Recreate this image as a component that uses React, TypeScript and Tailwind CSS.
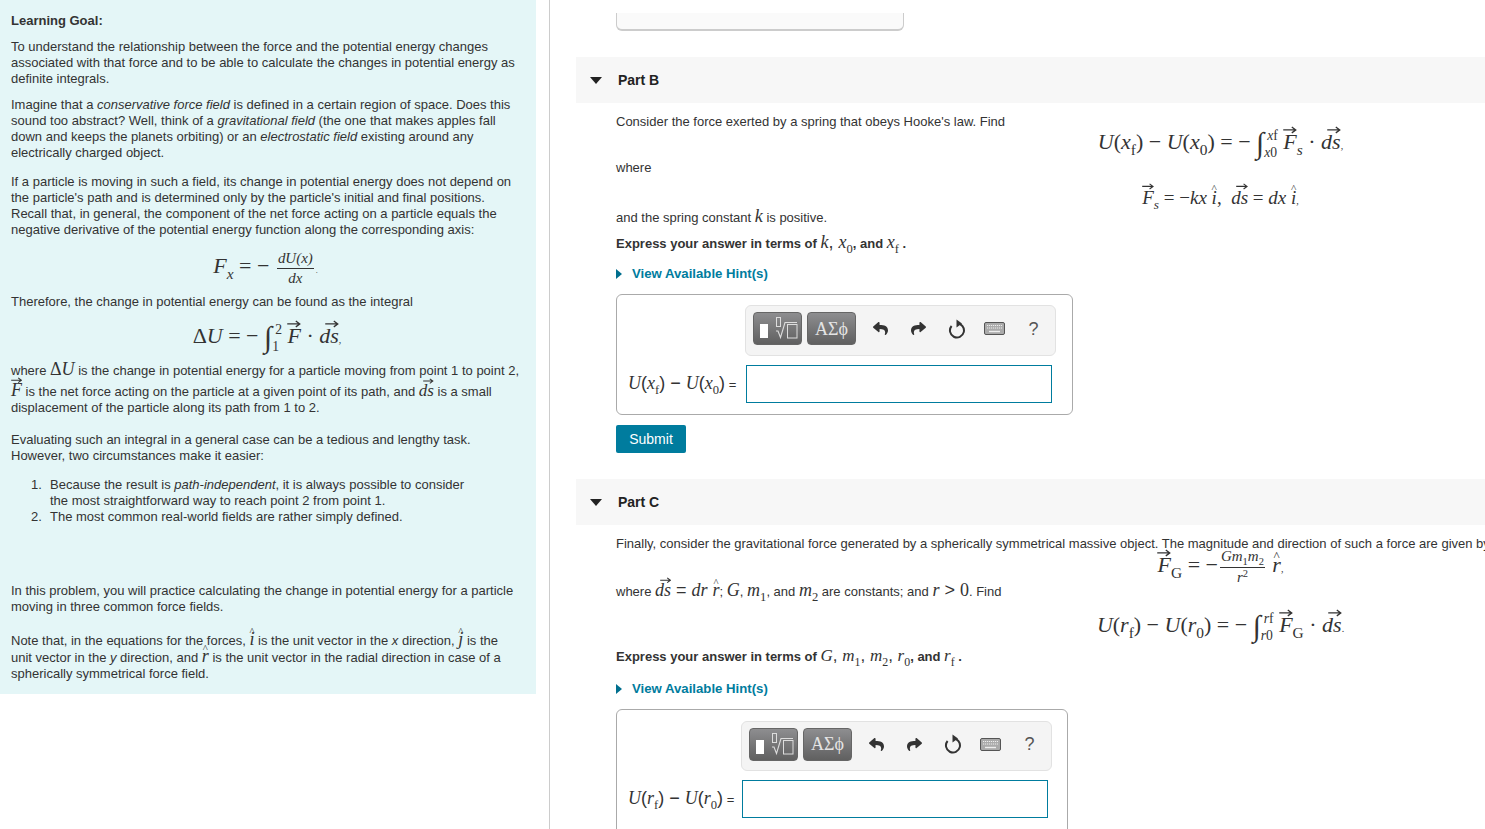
import type { ReactNode } from 'react';
import { FaReply, FaShare } from 'react-icons/fa';

const Mi = ({ children }: { children: ReactNode }) => (
  <span className="font-['Liberation_Serif',serif] italic">{children}</span>
);

const Mn = ({ children }: { children: ReactNode }) => (
  <span className="font-['Liberation_Serif',serif] not-italic">{children}</span>
);

const Sub = ({ children }: { children: ReactNode }) => (
  <sub className="text-[0.7em] leading-none align-[-0.15em]">{children}</sub>
);

// letter with a small arrow on top
const Vec = ({ children }: { children: ReactNode }) => (
  <span className="relative inline-block leading-none">
    {children}
    <svg className="absolute -top-[0.22em] right-0 h-[0.36em] w-[0.62em]" viewBox="0 0 10 6" fill="none" stroke="currentColor" strokeWidth="1">
      <path d="M0 3h9M6.5 0.8 9.5 3 6.5 5.2" />
    </svg>
  </span>
);

const Hat = ({ children }: { children: ReactNode }) => (
  <span className="relative inline-block leading-none">
    {children}
    <span className="absolute left-0 right-0 -top-[0.38em] text-center text-[0.6em] not-italic">^</span>
  </span>
);

const Int = ({ lo, hi }: { lo: ReactNode; hi: ReactNode }) => (
  <span className="inline-flex items-center align-middle">
    <span className="text-[1.35em] not-italic leading-none">∫</span>
    <span className="inline-flex flex-col gap-[3px] text-[0.62em] leading-none">
      <span className="ml-[3px]">{hi}</span>
      <span>{lo}</span>
    </span>
  </span>
);

const Frac = ({ top, bottom }: { top: ReactNode; bottom: ReactNode }) => (
  <span className="mx-[2px] inline-flex flex-col items-center align-middle text-[0.68em] leading-[1.1]">
    <span className="border-b border-[#333] px-[1px] pb-[2px]">{top}</span>
    <span className="pt-[1px]">{bottom}</span>
  </span>
);

const Display = ({ className, children }: { className: string; children: ReactNode }) => (
  <div className={`flex items-center justify-center font-['Liberation_Serif',serif] whitespace-nowrap ${className}`}>
    <div>{children}</div>
  </div>
);

const Toolbar = ({ className }: { className: string }) => (
  <div className={`flex items-center rounded-md border border-[#e2e2e2] bg-[#f4f4f4] pb-[4px] pl-[7px] ${className}`}>
    <div className="h-[33px] w-[49px] rounded-[4px] border border-[#666] bg-gradient-to-b from-[#8e8e90] to-[#606060]">
      <svg width="47" height="31" viewBox="0 0 47 31" fill="none">
        <rect x="6" y="11" width="8" height="14" fill="#fff" />
        <rect x="22.5" y="4.5" width="4" height="9" stroke="#ddd" />
        <path d="M22 18l2 0 2.5 6.5L31 9.5h12" stroke="#ddd" strokeWidth="1.1" />
        <rect x="33.5" y="11.5" width="9.5" height="13.5" stroke="#ddd" />
      </svg>
    </div>
    <div className="ml-[5px] flex h-[33px] w-[49px] items-center justify-center rounded-[4px] border border-[#666] bg-gradient-to-b from-[#8e8e90] to-[#606060] font-['Liberation_Serif',serif] text-[18px] text-[#e4e4e4]">
      ΑΣϕ
    </div>
    <div className="flex w-[48px] justify-center text-[#333]">
      <FaReply size={15} />
    </div>
    <div className="flex w-[28px] justify-center text-[#333]">
      <FaShare size={15} />
    </div>
    <div className="flex w-[50px] justify-center text-[#333]">
      <svg width="18" height="20" viewBox="0 0 18 20" fill="none">
        <path d="M9 4.5A7 7 0 1 1 3.6 7" stroke="currentColor" strokeWidth="2" />
        <path d="M8.5 0.5v8l5.5-4z" fill="currentColor" />
      </svg>
    </div>
    <div className="flex w-[24px] justify-center">
      <svg width="21" height="13" viewBox="0 0 21 13" className="shrink-0">
        <rect x="0.5" y="0.5" width="20" height="12" rx="1.5" fill="#aaa" stroke="#555" />
        <path d="M3 3.5h15M3 6h15" stroke="#eee" strokeDasharray="1.2 0.8" />
        <path d="M5 9.5h11" stroke="#eee" strokeWidth="1.4" />
      </svg>
    </div>
    <div className="flex w-[49px] justify-center pl-[6px] text-[18px] leading-none text-[#555]">?</div>
  </div>
);

const AnswerBox = ({ label, labelWidth, toolbar, top, className }: { label: ReactNode; labelWidth: string; toolbar: string; top: string; className: string }) => (
  <div className={`rounded-md border border-[#aaa] ${top} ${className}`}>
    <Toolbar className={toolbar} />
    <div className="mt-[9px] flex items-center pl-[11px]">
      <div className={`whitespace-nowrap ${labelWidth}`}>{label}</div>
      <div className="h-[38px] w-[306px] border border-[#007c9e] bg-white" />
    </div>
  </div>
);

const PartHeader = ({ title, className }: { title: string; className: string }) => (
  <div className={`ml-[26px] flex h-[46px] items-center bg-[#f7f7f7] ${className}`}>
    <span className="ml-[14px] h-0 w-0 border-x-[6px] border-t-[7px] border-x-transparent border-t-[#222]" />
    <span className="ml-[16px] text-[14px] font-bold text-[#222]">{title}</span>
  </div>
);

const Hint = ({ className }: { className: string }) => (
  <div className={`flex h-4 items-center text-[13.2px] font-bold text-[#007c9e] ${className}`}>
    <span className="h-0 w-0 border-y-[5.5px] border-l-[6px] border-y-transparent border-l-[#006f8e]" />
    <span className="ml-[10px]">View Available Hint(s)</span>
  </div>
);

const LearningGoal = () => (
  <div className="h-[694px] w-[536px] shrink-0 whitespace-nowrap bg-[#e4f6f7] pl-[11px] pt-[13px]">
    <p className="font-bold">Learning Goal:</p>
    <p className="mt-[10px]">
      To understand the relationship between the force and the potential energy changes<br />
      associated with that force and to be able to calculate the changes in potential energy as<br />
      definite integrals.
    </p>
    <p className="mt-[10px]">
      Imagine that a <em>conservative force field</em> is defined in a certain region of space. Does this<br />
      sound too abstract? Well, think of a <em>gravitational field</em> (the one that makes apples fall<br />
      down and keeps the planets orbiting) or an <em>electrostatic field</em> existing around any<br />
      electrically charged object.
    </p>
    <p className="mt-[13px]">
      If a particle is moving in such a field, its change in potential energy does not depend on<br />
      the particle's path and is determined only by the particle's initial and final positions.<br />
      Recall that, in general, the component of the net force acting on a particle equals the<br />
      negative derivative of the potential energy function along the corresponding axis:
    </p>
    <Display className="mt-[12px] h-[36px] pr-[16px] text-[22px]">
      <Mi>F<Sub>x</Sub></Mi> = − <Mi><Frac top={<>dU(x)</>} bottom="dx" /></Mi><span className="text-[8px]">.</span>
    </Display>
    <p className="mt-[8px]">Therefore, the change in potential energy can be found as the integral</p>
    <Display className="mt-[8px] h-[40px] pr-[13px] text-[22px]">
      <Mn>Δ</Mn><Mi>U</Mi> = − <Mi><Int lo={<Mn>1</Mn>} hi={<Mn>2</Mn>} /></Mi> <Mi><Vec>F</Vec></Mi> · <Mi>d<Vec>s</Vec></Mi><span className="text-[10px]">,</span>
    </Display>
    <p className="mt-[3px] h-4">
      where <span className="text-[18px]"><Mn>Δ</Mn><Mi>U</Mi></span> is the change in potential energy for a particle moving from point 1 to point 2,
    </p>
    <p className="mt-[4px] h-8">
      <span className="text-[18px]"><Mi><Vec>F</Vec></Mi></span> is the net force acting on the particle at a given point of its path, and <span className="text-[17px]"><Mi>d<Vec>s</Vec></Mi></span> is a small<br />
      displacement of the particle along its path from 1 to 2.
    </p>
    <p className="mt-[19px]">
      Evaluating such an integral in a general case can be a tedious and lengthy task.<br />
      However, two circumstances make it easier:
    </p>
    <ol className="mt-[13px] ml-[20px]">
      <li className="flex"><span className="w-[19px]">1.</span><div>Because the result is <em>path-independent</em>, it is always possible to consider<br />the most straightforward way to reach point 2 from point 1.</div></li>
      <li className="flex"><span className="w-[19px]">2.</span><div>The most common real-world fields are rather simply defined.</div></li>
    </ol>
    <p className="mt-[58px]">
      In this problem, you will practice calculating the change in potential energy for a particle<br />
      moving in three common force fields.
    </p>
    <div className="mt-[15px]">
      <p className="h-[17px]">Note that, in the equations for the forces, <span className="text-[18px]"><Mi><Hat>i</Hat></Mi></span> is the unit vector in the <em>x</em> direction, <span className="text-[18px]"><Mi><Hat>j</Hat></Mi></span> is the</p>
      <p className="h-4">unit vector in the <em>y</em> direction, and <span className="text-[18px]"><Mi><Hat>r</Hat></Mi></span> is the unit vector in the radial direction in case of a</p>
      <p className="mt-[3px] h-4">spherically symmetrical force field.</p>
    </div>
  </div>
);

export default function App() {
  return (
    <div className="flex h-screen w-full overflow-hidden bg-white font-['Liberation_Sans',Arial,sans-serif] text-[13px] leading-4 text-[#333]">
      <LearningGoal />
      <div className="ml-[13px] w-[936px] shrink-0 overflow-hidden border-l border-[#ccc]">
        <div className="ml-[66px] mt-[13px] h-[18px] w-[288px] rounded-b-md border-x border-b-2 border-[#ccc] bg-[#fafafa]" />

        <PartHeader title="Part B" className="mt-[26px]" />
        <div className="ml-[66px] w-[1209px]">
          <p className="mt-[11px]">Consider the force exerted by a spring that obeys Hooke's law. Find</p>
          <Display className="h-[28px] text-[22px]">
            <Mi>U</Mi>(<Mi>x<Sub><Mn>f</Mn></Sub></Mi>) − <Mi>U</Mi>(<Mi>x<Sub><Mn>0</Mn></Sub></Mi>) = − <Mi><Int lo={<>x<Mn>0</Mn></>} hi={<>x<Mn>f</Mn></>} /></Mi> <Mi><Vec>F</Vec><Sub>s</Sub></Mi> · <Mi>d<Vec>s</Vec></Mi><span className="text-[10px]">,</span>
          </Display>
          <p className="mt-[2px]">where</p>
          <Display className="mt-[12px] h-[20px] text-[19px]">
            <Mi><Vec>F</Vec><Sub>s</Sub></Mi> = −<Mi>kx</Mi> <Mi><Hat>i</Hat></Mi>,&nbsp; <Mi>d<Vec>s</Vec></Mi> = <Mi>dx</Mi> <Mi><Hat>i</Hat></Mi><span className="text-[10px]">,</span>
          </Display>
          <p className="h-4">and the spring constant <span className="text-[18px]"><Mi>k</Mi></span> is positive.</p>
          <p className="mt-[10px] h-4 font-bold">
            Express your answer in terms of <span className="text-[18px] font-normal"><Mi>k</Mi>, <Mi>x<Sub><Mn>0</Mn></Sub></Mi></span>, and <span className="text-[18px] font-normal"><Mi>x<Sub><Mn>f</Mn></Sub></Mi></span> .
          </p>
          <Hint className="mt-[16px]" />
          <AnswerBox
            className="mt-[12px] h-[121px] w-[457px]"
            top="pt-[10px]"
            toolbar="ml-[128px] h-[51px] w-[311px]"
            labelWidth="w-[118px]"
            label={<><span className="text-[18px]"><Mi>U</Mi>(<Mi>x<Sub><Mn>f</Mn></Sub></Mi>) − <Mi>U</Mi>(<Mi>x<Sub><Mn>0</Mn></Sub></Mi>)</span> =</>}
          />
          <button className="mt-[10px] flex h-[28px] w-[70px] items-center justify-center rounded-[2px] bg-[#007c9e] text-[14px] text-white">Submit</button>
        </div>

        <PartHeader title="Part C" className="mt-[26px]" />
        <div className="ml-[66px] w-[1209px]">
          <p className="mt-[11px] whitespace-nowrap">Finally, consider the gravitational force generated by a spherically symmetrical massive object. The magnitude and direction of such a force are given by</p>
          <Display className="h-[29px] text-[22px]">
            <Mi><Vec>F</Vec></Mi><Sub><Mn>G</Mn></Sub> = −<Mi><Frac top={<>Gm<Sub><Mn>1</Mn></Sub>m<Sub><Mn>2</Mn></Sub></>} bottom={<>r<sup className="text-[0.7em] leading-none"><Mn>2</Mn></sup></>} /></Mi> <Mi><Hat>r</Hat></Mi><span className="text-[10px]">,</span>
          </Display>
          <p className="h-4">
            where <span className="text-[18px]"><Mi>d<Vec>s</Vec></Mi> = <Mi>dr</Mi> <Mi><Hat>r</Hat></Mi></span>; <span className="text-[18px]"><Mi>G</Mi></span>, <span className="text-[18px]"><Mi>m<Sub><Mn>1</Mn></Sub></Mi></span>, and <span className="text-[18px]"><Mi>m<Sub><Mn>2</Mn></Sub></Mi></span> are constants; and <span className="text-[18px]"><Mi>r</Mi> &gt; <Mn>0</Mn></span>. Find
          </p>
          <Display className="mt-[17px] h-[26px] text-[22px]">
            <Mi>U</Mi>(<Mi>r<Sub><Mn>f</Mn></Sub></Mi>) − <Mi>U</Mi>(<Mi>r<Sub><Mn>0</Mn></Sub></Mi>) = − <Mi><Int lo={<>r<Mn>0</Mn></>} hi={<>r<Mn>f</Mn></>} /></Mi> <Mi><Vec>F</Vec></Mi><Sub><Mn>G</Mn></Sub> · <Mi>d<Vec>s</Vec></Mi><span className="text-[10px]">.</span>
          </Display>
          <p className="mt-[8px] h-4 font-bold">
            Express your answer in terms of <span className="text-[17px] font-normal"><Mi>G</Mi>, <Mi>m<Sub><Mn>1</Mn></Sub></Mi>, <Mi>m<Sub><Mn>2</Mn></Sub></Mi>, <Mi>r<Sub><Mn>0</Mn></Sub></Mi></span>, and <span className="text-[17px] font-normal"><Mi>r<Sub><Mn>f</Mn></Sub></Mi></span> .
          </p>
          <Hint className="mt-[17px]" />
          <AnswerBox
            className="mt-[12px] h-[140px] w-[452px]"
            top="pt-[11px]"
            toolbar="ml-[124px] h-[50px] w-[311px]"
            labelWidth="w-[114px]"
            label={<><span className="text-[18px]"><Mi>U</Mi>(<Mi>r<Sub><Mn>f</Mn></Sub></Mi>) − <Mi>U</Mi>(<Mi>r<Sub><Mn>0</Mn></Sub></Mi>)</span> =</>}
          />
        </div>
      </div>
    </div>
  );
}
